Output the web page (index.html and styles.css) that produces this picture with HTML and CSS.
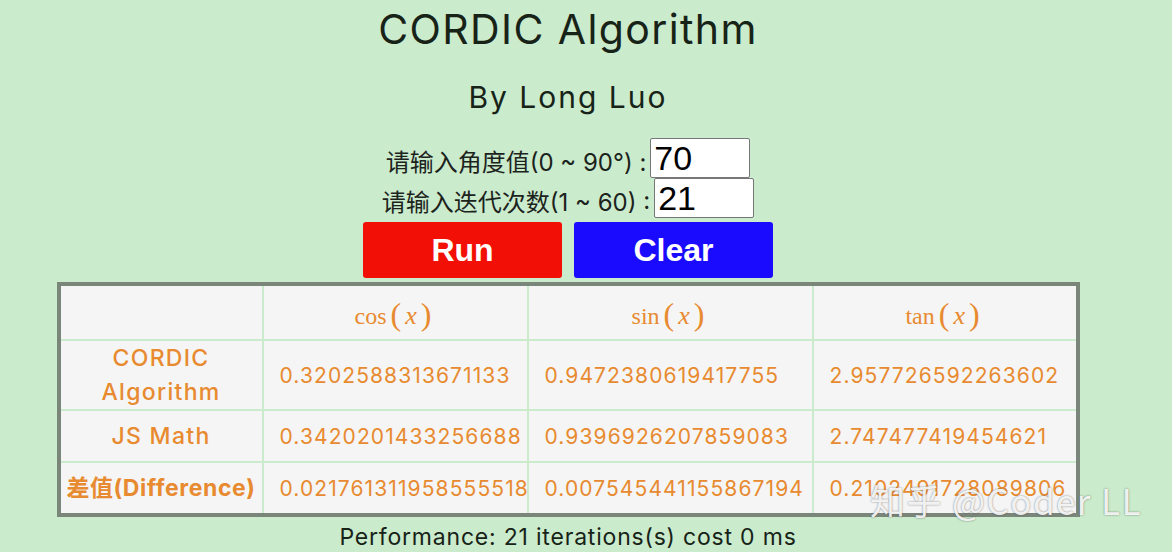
FILE: index.html
```html
<!DOCTYPE html>
<html lang="zh">
<head>
<meta charset="utf-8">
<title>CORDIC Algorithm</title>
<link rel="stylesheet" href="styles.css">
</head>
<body>
<div class="page">
  <h1 class="title">CORDIC Algorithm</h1>
  <h2 class="subtitle">By Long Luo</h2>
  <div class="form">
    <div class="field"><label class="label">请输入角度值(0 ~ 90°) :</label><input class="input" type="text" value="70"></div>
    <div class="field field2"><label class="label">请输入迭代次数(1 ~ 60) :</label><input class="input" type="text" value="21"></div>
    <div class="buttons">
      <button class="btn btn-run">Run</button>
      <button class="btn btn-clear">Clear</button>
    </div>
  </div>
  <table class="result">
    <colgroup>
      <col class="c1"><col class="c2"><col class="c3"><col class="c4">
    </colgroup>
    <tr class="head">
      <th></th>
      <th><span class="fn">cos</span><span class="paren">(</span><span class="var">x</span><span class="paren">)</span></th>
      <th><span class="fn">sin</span><span class="paren">(</span><span class="var">x</span><span class="paren">)</span></th>
      <th><span class="fn">tan</span><span class="paren">(</span><span class="var">x</span><span class="paren">)</span></th>
    </tr>
    <tr class="r1">
      <th class="rowhead">CORDIC<br>Algorithm</th>
      <td>0.3202588313671133</td>
      <td>0.9472380619417755</td>
      <td>2.957726592263602</td>
    </tr>
    <tr class="r2">
      <th class="rowhead">JS Math</th>
      <td>0.3420201433256688</td>
      <td>0.9396926207859083</td>
      <td>2.747477419454621</td>
    </tr>
    <tr class="r3">
      <th class="rowhead bold">差值(Difference)</th>
      <td>0.021761311958555518</td>
      <td>0.007545441155867194</td>
      <td>0.2102491728089806</td>
    </tr>
  </table>
  <p class="perf">Performance: 21 iterations(s) cost 0 ms</p>
</div>
<div class="watermark">知乎 @Coder LL</div>
</body>
</html>
```
FILE: styles.css
```css
html, body {
  margin: 0;
  padding: 0;
  background: #caebcc;
  height: 100%;
  overflow: hidden;
}
body {
  position: relative;
  font-family: Inter, "Noto Sans CJK SC", sans-serif;
  color: #182318;
}
.page {
  width: 1136px;
  text-align: center;
}
.title {
  margin: 0;
  font-size: 41px;
  font-weight: 400;
  letter-spacing: 1.4px;
  line-height: 58px;
}
.subtitle {
  margin: 0;
  font-size: 30px;
  font-weight: 400;
  letter-spacing: 2px;
  line-height: 79px;
}
.form {
  padding-top: 1px;
}
.field {
  height: 40px;
  display: flex;
  justify-content: center;
  align-items: center;
  gap: 4px;
}
.label {
  font-size: 24px;
  font-family: Inter, "Noto Sans CJK SC", sans-serif;
  color: #1c231c;
  padding-top: 4px;
}
.input {
  box-sizing: border-box;
  width: 100px;
  height: 40px;
  padding: 0 3px;
  border: 1px solid #777;
  border-radius: 2px;
  background: #fff;
  font-family: "Liberation Sans", Arial, sans-serif;
  font-size: 34px;
  color: #000;
  line-height: 38px;
}
.buttons {
  display: flex;
  justify-content: center;
  gap: 12px;
  margin-top: 4px;
}
.btn {
  width: 199px;
  height: 56px;
  border: none;
  border-radius: 3px;
  color: #fff;
  font-family: "Liberation Sans", Arial, sans-serif;
  font-weight: 700;
  font-size: 32px;
  padding: 0;
}
.btn-run { background: #f20f05; }
.btn-clear { background: #1a0bff; }
.result {
  margin: 4px auto 0;
  width: 1023px;
  table-layout: fixed;
  border: 4px solid #7b867b;
  border-collapse: collapse;
  background: #f5f5f5;
  color: #e88a2f;
}
.c1 { width: 204px; }
.c2 { width: 265px; }
.c3 { width: 285px; }
.c4 { width: 265px; }
.result th, .result td {
  border: 2px solid #caebcc;
  font-size: 21px;
  font-weight: 400;
  padding: 0;
  text-align: center;
  white-space: nowrap;
  overflow: visible;
}
.result td { text-align: left; padding-left: 16px; letter-spacing: 1.1px; }
.head { height: 56px; }
.r1 { height: 69px; }
.r2 { height: 52px; }
.r3 { height: 53px; }
.head th {
  font-family: "Liberation Serif", serif;
  font-size: 21px;
  padding-top: 2px;
}
.fn { font-family: "Liberation Serif", serif; font-size: 24px; }
.paren { font-family: "Liberation Serif", serif; font-size: 32px; font-weight: 300; padding: 0 4px; position: relative; top: 1px; }
.var { font-family: "Liberation Serif", serif; font-style: italic; font-size: 26px; }
.rowhead { font-size: 23px !important; font-weight: 500 !important; letter-spacing: 1.3px; line-height: 34px; }
.rowhead.bold { font-weight: 700 !important; letter-spacing: 0.6px; }
.perf {
  margin: 6px 0 0;
  font-size: 23px;
  letter-spacing: 0.8px;
  line-height: 28px;
}
.watermark {
  position: absolute;
  left: 870px;
  top: 474px;
  font-family: "Noto Sans CJK SC", sans-serif;
  font-size: 35px;
  letter-spacing: 1.4px;
  color: rgba(255, 255, 255, 0.9);
  text-shadow: 0 0 2px rgba(60, 60, 60, 0.65);
  white-space: nowrap;
}
```
